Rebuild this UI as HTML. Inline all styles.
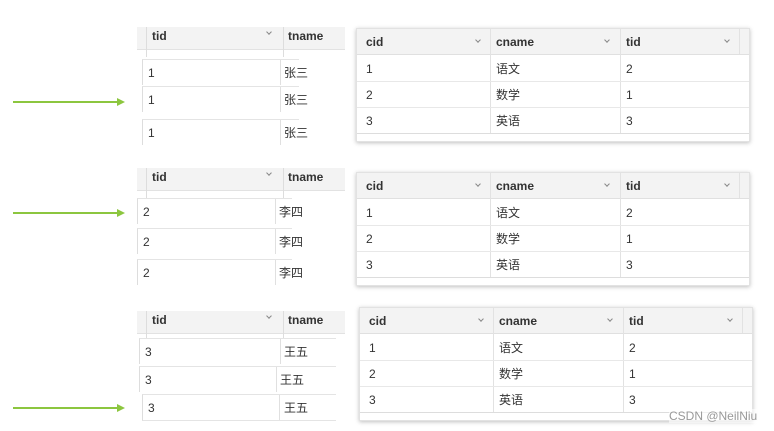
<!DOCTYPE html>
<html><head><meta charset="utf-8"><style>
body{margin:0;width:774px;height:431px;background:#fff;position:relative;overflow:hidden;font-family:"Liberation Sans","Noto Sans CJK SC",sans-serif;font-size:12px;color:#333}
span,b{white-space:nowrap;line-height:14px}
.a{position:absolute}
.arrow{position:absolute;height:2px;background:#8cc63f;left:13px;width:105px}
.arrow:after{content:"";position:absolute;right:-7px;top:-3px;border-left:8px solid #8cc63f;border-top:4px solid transparent;border-bottom:4px solid transparent}
.lh{position:absolute;left:137px;width:208px;height:22px;background:#f3f3f3;border-bottom:1px solid #e2e2e2}
.lh b{position:absolute;top:2px;font-size:12px}
.lh .l{position:absolute;left:9px;top:0;bottom:-8px;border-left:1px solid #ddd}
.lh .d{position:absolute;left:146px;top:0;bottom:-8px;border-left:1px solid #ddd}
.c{position:absolute;width:6px;height:6px}
.c:before{content:"";position:absolute;left:1px;top:0;width:3px;height:3px;border-right:1px solid #888;border-bottom:1px solid #888;transform:rotate(45deg)}
.r{position:absolute;height:25px;border-top:1px solid #e4e4e4;border-left:1px solid #ddd;background:#fff}
.r span{position:absolute;top:6px}
.r i{position:absolute;top:0;bottom:0;border-left:1px solid #e0e0e0}
.t{position:absolute;width:392px;height:112px;border:1px solid #e2e2e2;box-shadow:0 1px 4px rgba(0,0,0,.25);background:#fff}
.t .h{position:absolute;left:0;top:0;width:392px;height:25px;background:#f3f3f3;border-bottom:1px solid #e0e0e0}
.t b{position:absolute;top:6px;font-size:12px}
.t .v{position:absolute;top:0;height:105px;border-left:1px solid #e2e2e2}
.t .hl{position:absolute;left:0;width:392px;border-top:1px solid #e8e8e8}
.t span{position:absolute}
</style></head><body>

<div class="arrow" style="top:101px"></div>
<div class="arrow" style="top:212px"></div>
<div class="arrow" style="top:407px"></div>

<div class="lh" style="top:27px"><div class="l"></div><div class="d"></div><b style="left:15px">tid</b><span class="c" style="left:129px;top:3px"></span><b style="left:151px">tname</b></div>
<div class="r" style="left:142px;top:59px;width:156px"><span style="left:5px">1</span><i style="left:137px"></i><span style="left:141px">张三</span></div>
<div class="r" style="left:142px;top:86px;width:156px"><span style="left:5px">1</span><i style="left:137px"></i><span style="left:141px">张三</span></div>
<div class="r" style="left:142px;top:119px;width:156px"><span style="left:5px">1</span><i style="left:137px"></i><span style="left:141px">张三</span></div>

<div class="lh" style="top:168px"><div class="l"></div><div class="d"></div><b style="left:15px">tid</b><span class="c" style="left:129px;top:3px"></span><b style="left:151px">tname</b></div>
<div class="r" style="left:137px;top:198px;width:154px"><span style="left:5px">2</span><i style="left:137px"></i><span style="left:141px">李四</span></div>
<div class="r" style="left:137px;top:228px;width:154px"><span style="left:5px">2</span><i style="left:137px"></i><span style="left:141px">李四</span></div>
<div class="r" style="left:137px;top:259px;width:154px"><span style="left:5px">2</span><i style="left:137px"></i><span style="left:141px">李四</span></div>

<div class="lh" style="top:311px"><div class="l"></div><div class="d"></div><b style="left:15px">tid</b><span class="c" style="left:129px;top:3px"></span><b style="left:151px">tname</b></div>
<div class="r" style="left:139px;top:338px;width:196px"><span style="left:5px">3</span><i style="left:140px"></i><span style="left:144px">王五</span></div>
<div class="r" style="left:139px;top:366px;width:196px"><span style="left:5px">3</span><i style="left:136px"></i><span style="left:140px">王五</span></div>
<div class="r" style="left:142px;top:394px;width:193px;border-bottom:1px solid #e4e4e4"><span style="left:5px">3</span><i style="left:136px"></i><span style="left:141px">王五</span></div>

<div class="t" style="left:356px;top:28px">
<div class="h"></div>
<b style="left:9px">cid</b><span class="c" style="left:118px;top:9px"></span>
<b style="left:139px">cname</b><span class="c" style="left:247px;top:9px"></span>
<b style="left:269px">tid</b><span class="c" style="left:367px;top:9px"></span>
<div class="v" style="left:133px"></div><div class="v" style="left:263px"></div><div class="v" style="left:382px;height:25px"></div>
<div class="hl" style="top:52px"></div><div class="hl" style="top:78px"></div><div class="hl" style="top:104px;border-color:#ddd"></div>
<span style="left:9px;top:33px">1</span><span style="left:139px;top:33px">语文</span><span style="left:269px;top:33px">2</span>
<span style="left:9px;top:59px">2</span><span style="left:139px;top:59px">数学</span><span style="left:269px;top:59px">1</span>
<span style="left:9px;top:85px">3</span><span style="left:139px;top:85px">英语</span><span style="left:269px;top:85px">3</span>
</div>

<div class="t" style="left:356px;top:172px">
<div class="h"></div>
<b style="left:9px">cid</b><span class="c" style="left:118px;top:9px"></span>
<b style="left:139px">cname</b><span class="c" style="left:247px;top:9px"></span>
<b style="left:269px">tid</b><span class="c" style="left:367px;top:9px"></span>
<div class="v" style="left:133px"></div><div class="v" style="left:263px"></div><div class="v" style="left:382px;height:25px"></div>
<div class="hl" style="top:52px"></div><div class="hl" style="top:78px"></div><div class="hl" style="top:104px;border-color:#ddd"></div>
<span style="left:9px;top:33px">1</span><span style="left:139px;top:33px">语文</span><span style="left:269px;top:33px">2</span>
<span style="left:9px;top:59px">2</span><span style="left:139px;top:59px">数学</span><span style="left:269px;top:59px">1</span>
<span style="left:9px;top:85px">3</span><span style="left:139px;top:85px">英语</span><span style="left:269px;top:85px">3</span>
</div>

<div class="t" style="left:359px;top:307px">
<div class="h"></div>
<b style="left:9px">cid</b><span class="c" style="left:118px;top:9px"></span>
<b style="left:139px">cname</b><span class="c" style="left:247px;top:9px"></span>
<b style="left:269px">tid</b><span class="c" style="left:367px;top:9px"></span>
<div class="v" style="left:133px"></div><div class="v" style="left:263px"></div><div class="v" style="left:382px;height:25px"></div>
<div class="hl" style="top:52px"></div><div class="hl" style="top:78px"></div><div class="hl" style="top:104px;border-color:#ddd"></div>
<span style="left:9px;top:33px">1</span><span style="left:139px;top:33px">语文</span><span style="left:269px;top:33px">2</span>
<span style="left:9px;top:59px">2</span><span style="left:139px;top:59px">数学</span><span style="left:269px;top:59px">1</span>
<span style="left:9px;top:85px">3</span><span style="left:139px;top:85px">英语</span><span style="left:269px;top:85px">3</span>
</div>

<div class="a" style="left:669px;top:409px;color:#999;font-size:12px;background:rgba(255,255,255,.6)">CSDN @NeilNiu</div>
</body></html>
